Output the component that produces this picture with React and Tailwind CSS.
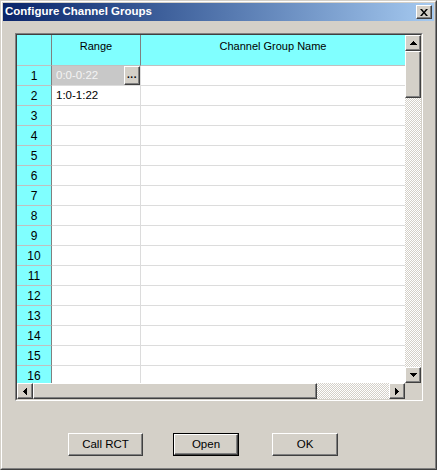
// Configure Channel Groups — classic Win2000 dialog with a scrollable grid

const ROWS = Array.from({ length: 16 }, (_, i) => i + 1);

const raised =
  'border border-t-white border-l-white border-r-[#404040] border-b-[#404040] shadow-[inset_-1px_-1px_0_#808080]';

function ArrowUp() {
  return (
    <svg width="7" height="4" viewBox="0 0 7 4" className="block">
      <path d="M3 0h1v1h1v1h1v1h1v1H0V3h1V2h1V1h1z" fill="#000" />
    </svg>
  );
}

function ArrowDown() {
  return (
    <svg width="7" height="4" viewBox="0 0 7 4" className="block">
      <path d="M0 0h7v1H6v1H5v1H4v1H3V3H2V2H1V1H0z" fill="#000" />
    </svg>
  );
}

function ArrowLeft() {
  return (
    <svg width="4" height="7" viewBox="0 0 4 7" className="block">
      <path d="M3 0h1v7H3V6H2V5H1V4H0V3h1V2h1V1h1z" fill="#000" />
    </svg>
  );
}

function ArrowRight() {
  return (
    <svg width="4" height="7" viewBox="0 0 4 7" className="block">
      <path d="M0 0h1v1h1v1h1v1h1v1H3v1H2v1H1v1H0z" fill="#000" />
    </svg>
  );
}

function ScrollButton({ children }) {
  return (
    <div className={`w-[16px] h-[16px] shrink-0 bg-[#d4d0c8] flex items-center justify-center ${raised}`}>
      {children}
    </div>
  );
}

function DialogButton({ label, width, isDefault }) {
  return (
    <div className={`h-[23px] ${width} ${isDefault ? 'border border-black' : ''}`}>
      <div
        className={`h-full w-full bg-[#d4d0c8] flex items-center justify-center text-[11.5px] text-black ${raised}`}
      >
        {label}
      </div>
    </div>
  );
}

export default function App() {
  return (
    <div className="w-[437px] h-[470px] bg-[#d4d0c8] border border-t-[#d4d0c8] border-l-[#d4d0c8] border-r-[#404040] border-b-[#404040] font-['Liberation_Sans',Arial,sans-serif] select-none">
      <div className="h-full border border-t-white border-l-white border-r-[#808080] border-b-[#808080] p-px flex flex-col">
        {/* title bar */}
        <div className="h-[18px] shrink-0 bg-gradient-to-r from-[#0a246a] to-[#a6caf0] flex items-center justify-between pl-[2px] pr-[2px]">
          <span className="text-white font-bold text-[11.5px] leading-none">Configure Channel Groups</span>
          <div className={`w-[16px] h-[14px] bg-[#d4d0c8] flex items-center justify-center ${raised}`}>
            <svg width="8" height="7" viewBox="0 0 8 7">
              <path d="M0 0h2l2 2.5L6 0h2L5 3.5 8 7H6L4 4.5 2 7H0l3-3.5z" fill="#000" />
            </svg>
          </div>
        </div>

        {/* grid */}
        <div className="pt-[12px] pl-[12px]">
          <div className="w-[408px] h-[368px] border border-t-[#808080] border-l-[#808080] border-r-white border-b-white">
            <div className="w-full h-full border border-t-[#404040] border-l-[#404040] border-r-[#d4d0c8] border-b-[#d4d0c8] grid grid-cols-[388px_16px] grid-rows-[348px_16px] bg-white">
              <div className="overflow-hidden text-[11px] text-black">
                <div className="grid grid-cols-[35px_89px_264px] h-[31px]">
                  <div className="bg-[#80ffff] border-r border-b border-r-[#808080] border-b-[#c0c0c0]" />
                  <div className="bg-[#80ffff] border-r border-b border-r-[#808080] border-b-[#c0c0c0] text-center pt-[3px] text-[11px]">
                    Range
                  </div>
                  <div className="bg-[#80ffff] border-b border-b-[#c0c0c0] text-center pt-[3px] text-[11px]">
                    Channel Group Name
                  </div>
                </div>
                {ROWS.map((n) => (
                  <div key={n} className="grid grid-cols-[35px_89px_264px] h-[20px]">
                    <div className="bg-[#80ffff] border-r border-b border-r-[#808080] border-b-[#c0c0c0] flex items-center justify-center text-[12px]">
                      {n}
                    </div>
                    {n === 1 ? (
                      <div className="border-r border-b border-r-[#dcdcdc] border-b-[#dcdcdc] flex bg-[#c8c8c8]">
                        <span className="flex-1 pl-[4px] flex items-center text-[#f4f4f4] text-[11.5px]">0:0-0:22</span>
                        <div className={`w-[16px] h-[19px] bg-[#d4d0c8] flex items-end justify-center pb-[4px] ${raised}`}>
                          <span className="text-[10px] leading-none font-bold tracking-[0.5px]">...</span>
                        </div>
                      </div>
                    ) : (
                      <div className="border-r border-b border-r-[#dcdcdc] border-b-[#dcdcdc] flex items-center pl-[4px] text-[11.5px]">
                        {n === 2 ? '1:0-1:22' : ''}
                      </div>
                    )}
                    <div className="border-b border-b-[#dcdcdc]" />
                  </div>
                ))}
              </div>

              {/* vertical scrollbar */}
              <div className="flex flex-col bg-[repeating-conic-gradient(#d4d0c8_0_25%,#ffffff_0_50%)] bg-[length:2px_2px]">
                <ScrollButton>
                  <ArrowUp />
                </ScrollButton>
                <div className={`h-[47px] bg-[#d4d0c8] ${raised}`} />
                <div className="flex-1" />
                <ScrollButton>
                  <ArrowDown />
                </ScrollButton>
              </div>

              {/* horizontal scrollbar */}
              <div className="flex bg-[repeating-conic-gradient(#d4d0c8_0_25%,#ffffff_0_50%)] bg-[length:2px_2px]">
                <ScrollButton>
                  <ArrowLeft />
                </ScrollButton>
                <div className={`w-[284px] bg-[#d4d0c8] ${raised}`} />
                <div className="flex-1" />
                <ScrollButton>
                  <ArrowRight />
                </ScrollButton>
              </div>
              <div className="bg-[#d4d0c8]" />
            </div>
          </div>
        </div>

        {/* dialog buttons */}
        <div className="flex items-center pt-[32px] pl-[65px]">
          <DialogButton label="Call RCT" width="w-[75px]" />
          <div className="w-[30px]" />
          <DialogButton label="Open" width="w-[66px]" isDefault />
          <div className="w-[33px]" />
          <DialogButton label="OK" width="w-[66px]" />
        </div>
      </div>
    </div>
  );
}
